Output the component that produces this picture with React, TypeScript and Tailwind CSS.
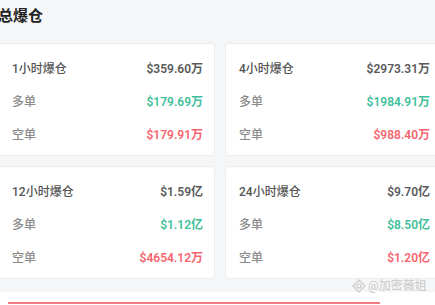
import React from "react";

type Row = { label: string; value: string; tone: "main" | "long" | "short" };
type Card = { rows: Row[] };

const cards: Card[] = [
  { rows: [
    { label: "1小时爆仓", value: "$359.60万", tone: "main" },
    { label: "多单", value: "$179.69万", tone: "long" },
    { label: "空单", value: "$179.91万", tone: "short" },
  ]},
  { rows: [
    { label: "4小时爆仓", value: "$2973.31万", tone: "main" },
    { label: "多单", value: "$1984.91万", tone: "long" },
    { label: "空单", value: "$988.40万", tone: "short" },
  ]},
  { rows: [
    { label: "12小时爆仓", value: "$1.59亿", tone: "main" },
    { label: "多单", value: "$1.12亿", tone: "long" },
    { label: "空单", value: "$4654.12万", tone: "short" },
  ]},
  { rows: [
    { label: "24小时爆仓", value: "$9.70亿", tone: "main" },
    { label: "多单", value: "$8.50亿", tone: "long" },
    { label: "空单", value: "$1.20亿", tone: "short" },
  ]},
];

const font = { fontFamily: 'Roboto, "Noto Sans CJK SC", sans-serif' };

export default function App() {
  return (
    <div className="relative w-[435px] h-[305px] overflow-hidden bg-white" style={font}>
      <div className="ml-[-2px] w-[444px] bg-[#f5f6f7] pb-[13px]">
        <div className="h-[43px] pt-[7px] text-[15px] leading-[18px] font-bold text-[#222]">总爆仓</div>
        <div className="grid grid-cols-2 gap-x-[10px] gap-y-[10px]">
          {cards.map((c, i) => (
            <div key={i} className="bg-white rounded-[4px] border border-[#ececec] pl-[13px] pr-[11px] pt-[8px] pb-[4px]">
              {c.rows.map((r, j) => (
                <div key={j} className="h-[33px] flex items-center justify-between text-[12px]">
                  <span className={r.tone === "main" ? "font-medium text-[#555]" : "font-medium text-[#8a8a8a]"}>{r.label}</span>
                  <span
                    className={
                      "font-semibold " +
                      (r.tone === "main" ? "text-[#5a5a5a]" : r.tone === "long" ? "text-[#3fbf9b]" : "text-[#f6656f]")
                    }
                  >
                    {r.value}
                  </span>
                </div>
              ))}
            </div>
          ))}
        </div>
      </div>
      <div className="ml-[8px] mt-[10px] w-[372px] h-[2px] bg-[#f47c83]" />
      <div className="absolute left-[352px] top-[278px] flex items-center gap-[2px] text-[12px] leading-[16px] text-[#c9c9c9]">
        <svg width="14" height="14" viewBox="0 0 14 14" fill="none" stroke="#c9c9c9" strokeWidth="1.2">
          <path d="M7 1 L13 7 L7 13 L1 7 Z" />
          <circle cx="7" cy="7" r="2" />
        </svg>
        <span>@加密薇姐</span>
      </div>
    </div>
  );
}
